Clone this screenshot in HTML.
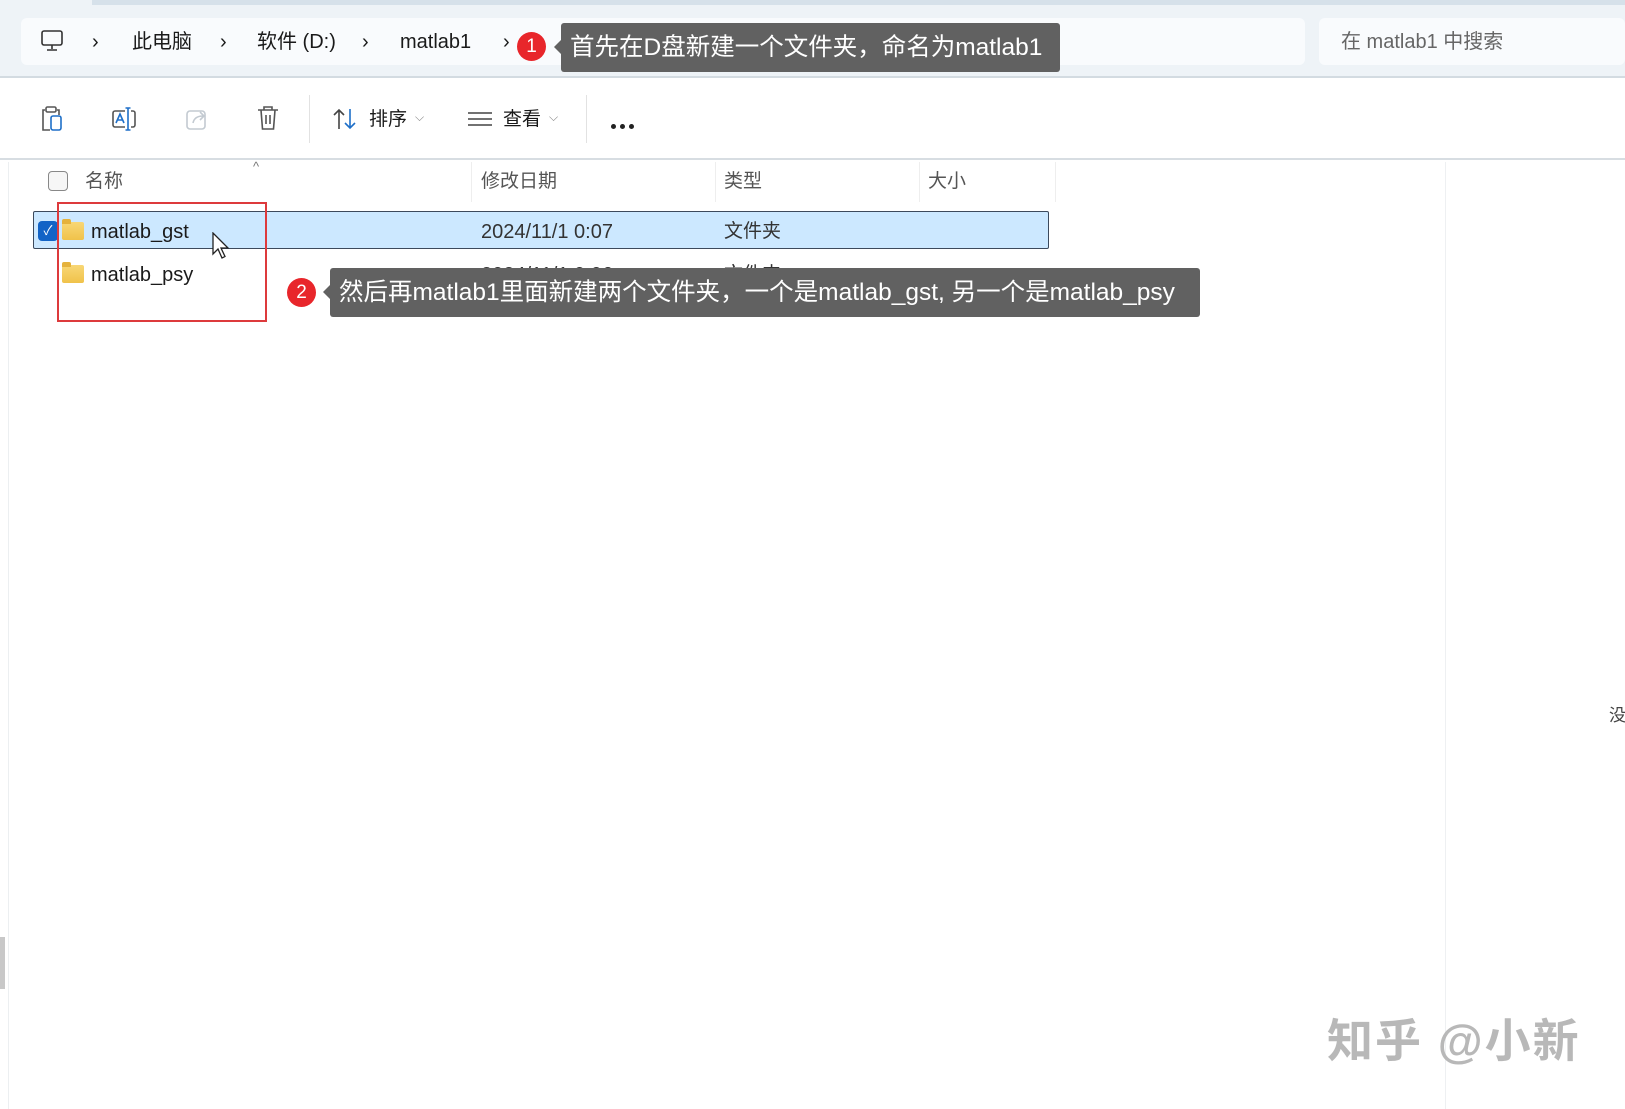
<!DOCTYPE html>
<html><head><meta charset="utf-8"><style>
*{margin:0;padding:0;box-sizing:border-box}
body{width:1625px;height:1109px;overflow:hidden;background:#fff;position:relative;font-family:"Liberation Sans","Noto Sans CJK SC",sans-serif;color:#1a1a1a}
.a{position:absolute;white-space:nowrap;line-height:1}
.t{font-size:20px}
</style></head><body>
<div class="a" style="left:0;top:0;width:1625px;height:78px;background:#eef3f7;border-bottom:2px solid #d3dbe1"></div>
<div class="a" style="left:92px;top:0;width:1533px;height:5px;background:#d6e1ea"></div>
<div class="a" style="left:21px;top:18px;width:1284px;height:47px;background:#f9fbfd;border-radius:6px"></div>
<div class="a" style="left:1319px;top:18px;width:306px;height:47px;background:#f9fbfd;border-radius:6px"></div>
<svg class="a" style="left:40px;top:29px" width="24" height="24" viewBox="0 0 24 24" fill="none" stroke="#333" stroke-width="1.6"><rect x="2" y="2" width="20" height="14" rx="2"/><path d="M12 16v4M7 21h10"/></svg>
<div class="a t" style="left:92px;top:32px">›</div>
<div class="a t" style="left:132px;top:32px">此电脑</div>
<div class="a t" style="left:220px;top:32px">›</div>
<div class="a t" style="left:257px;top:32px">软件 (D:)</div>
<div class="a t" style="left:362px;top:32px">›</div>
<div class="a t" style="left:400px;top:32px">matlab1</div>
<div class="a t" style="left:503px;top:32px">›</div>
<div class="a t" style="left:1341px;top:32px;color:#666">在 matlab1 中搜索</div>
<div class="a" style="left:517px;top:32px;width:29px;height:29px;border-radius:50%;background:#e8262b;color:#fff;font-size:19px;text-align:center;line-height:29px">1</div>
<div class="a" style="left:554px;top:39px;width:0;height:0;border:8px solid transparent;border-right-color:#616161;border-left:0"></div>
<div class="a" style="left:561px;top:23px;width:499px;height:49px;background:#616161;border-radius:3px;color:#fff;font-size:24.5px;line-height:49px;padding-left:9px">首先在D盘新建一个文件夹，命名为matlab1</div>
<div class="a" style="left:0;top:80px;width:1625px;height:80px;background:#fff;border-bottom:2px solid #d7dde2"></div>
<svg class="a" style="left:40px;top:105px" width="24" height="28" viewBox="0 0 24 28" fill="none" stroke="#555" stroke-width="1.6"><path d="M5 5H3v20h7M17 5h2v5"/><rect x="6" y="2" width="10" height="5" rx="1.5"/><rect x="11" y="11" width="10" height="14" rx="2" stroke="#1e6fc8"/></svg>
<svg class="a" style="left:110px;top:105px" width="28" height="28" viewBox="0 0 28 28" fill="none" stroke="#555" stroke-width="1.6"><path d="M15 6H5a2 2 0 0 0-2 2v12a2 2 0 0 0 2 2h10M21 6h2a2 2 0 0 1 2 2v12a2 2 0 0 1-2 2h-2"/><path d="M6 18l4-9 4 9M7.5 15h5" stroke="#1e6fc8"/><path d="M18 3v22M15.5 3h5M15.5 25h5" stroke="#1e6fc8"/></svg>
<svg class="a" style="left:184px;top:106px" width="26" height="26" viewBox="0 0 26 26" fill="none" stroke="#c3cad1" stroke-width="1.6"><rect x="3" y="5" width="18" height="18" rx="3"/><path d="M9 17c1-5 5-7 10-7M16 6l4 4-4 4"/></svg>
<svg class="a" style="left:256px;top:104px" width="24" height="28" viewBox="0 0 24 28" fill="none" stroke="#555" stroke-width="1.6"><path d="M2 6h20M8 6V3h8v3M5 6l1.5 19h11L19 6M10 11v9M14 11v9"/></svg>
<div class="a" style="left:309px;top:95px;width:1px;height:48px;background:#e2e2e2"></div>
<svg class="a" style="left:332px;top:107px" width="26" height="24" viewBox="0 0 26 24" fill="none" stroke-width="1.6"><path d="M7 22V3M2 8l5-5 5 5" stroke="#444"/><path d="M18 2v19M13 16l5 5 5-5" stroke="#1e6fc8"/></svg>
<div class="a" style="left:369px;top:110px;font-size:19px">排序</div>
<div class="a" style="left:415px;top:111px;font-size:12px;color:#888">⌵</div>
<svg class="a" style="left:468px;top:111px" width="24" height="16" viewBox="0 0 24 16" stroke="#444" stroke-width="1.6"><path d="M0 2h24M0 8h24M0 14h24"/></svg>
<div class="a" style="left:503px;top:110px;font-size:19px">查看</div>
<div class="a" style="left:549px;top:111px;font-size:12px;color:#888">⌵</div>
<div class="a" style="left:586px;top:95px;width:1px;height:48px;background:#e2e2e2"></div>
<div class="a" style="left:611px;top:117px"><span style="display:inline-block;width:5px;height:5px;border-radius:50%;background:#222;margin-right:4px"></span><span style="display:inline-block;width:5px;height:5px;border-radius:50%;background:#222;margin-right:4px"></span><span style="display:inline-block;width:5px;height:5px;border-radius:50%;background:#222"></span></div>
<div class="a" style="left:8px;top:162px;width:1px;height:947px;background:#eceff1"></div>
<div class="a" style="left:0;top:937px;width:5px;height:52px;background:#c8c8c8"></div>
<div class="a" style="left:1445px;top:162px;width:1px;height:947px;background:#eef0f2"></div>
<div class="a" style="left:48px;top:171px;width:20px;height:20px;border:1.5px solid #888;border-radius:4px;background:#f6f6f6"></div>
<div class="a" style="left:85px;top:172px;font-size:19px;color:#555">名称</div>
<div class="a" style="left:253px;top:160px;font-size:13px;color:#777">^</div>
<div class="a" style="left:471px;top:162px;width:1px;height:40px;background:#eee"></div>
<div class="a" style="left:715px;top:162px;width:1px;height:40px;background:#eee"></div>
<div class="a" style="left:919px;top:162px;width:1px;height:40px;background:#eee"></div>
<div class="a" style="left:1055px;top:162px;width:1px;height:40px;background:#eee"></div>
<div class="a" style="left:481px;top:172px;font-size:19px;color:#555">修改日期</div>
<div class="a" style="left:724px;top:172px;font-size:19px;color:#555">类型</div>
<div class="a" style="left:928px;top:172px;font-size:19px;color:#555">大小</div>
<div class="a" style="left:33px;top:211px;width:1016px;height:38px;background:#cce8ff;border:1.5px solid #3c4a5c;border-radius:2px"></div>
<div class="a" style="left:38px;top:221px;width:20px;height:20px;background:#1263c6;border-radius:4px;color:#fff;font-size:13px;text-align:center;line-height:20px">✓</div>
<div class="a" style="left:62px;top:222px;width:22px;height:18px;background:linear-gradient(#f8d775,#f0c24a);border-radius:2px"></div>
<div class="a" style="left:62px;top:219px;width:9px;height:5px;background:#e5b23c;border-radius:2px 2px 0 0"></div>
<div class="a" style="left:91px;top:222px;font-size:20px">matlab_gst</div>
<div class="a" style="left:481px;top:222px;font-size:20px;color:#333">2024/11/1 0:07</div>
<div class="a" style="left:724px;top:222px;font-size:19px;color:#333">文件夹</div>
<svg class="a" style="left:212px;top:232px" width="20" height="28" viewBox="0 0 20 28"><path d="M1 1v21l5-5 4 9 3-1.5-4-8.5h7z" fill="#fff" stroke="#222" stroke-width="1.3"/></svg>
<div class="a" style="left:62px;top:265px;width:22px;height:18px;background:linear-gradient(#f8d775,#f0c24a);border-radius:2px"></div>
<div class="a" style="left:62px;top:262px;width:9px;height:5px;background:#e5b23c;border-radius:2px 2px 0 0"></div>
<div class="a" style="left:91px;top:265px;font-size:20px">matlab_psy</div>
<div class="a" style="left:481px;top:265px;font-size:20px;color:#333">2024/11/1 0:06</div>
<div class="a" style="left:724px;top:265px;font-size:19px;color:#333">文件夹</div>
<div class="a" style="left:57px;top:202px;width:210px;height:120px;border:2px solid #dd3a3c"></div>
<div class="a" style="left:287px;top:278px;width:29px;height:29px;border-radius:50%;background:#e8262b;color:#fff;font-size:19px;text-align:center;line-height:29px">2</div>
<div class="a" style="left:323px;top:284px;width:0;height:0;border:8px solid transparent;border-right-color:#616161;border-left:0"></div>
<div class="a" style="left:330px;top:268px;width:870px;height:49px;background:#616161;border-radius:3px;color:#fff;font-size:24.5px;line-height:49px;padding-left:9px">然后再matlab1里面新建两个文件夹，一个是matlab_gst, 另一个是matlab_psy</div>
<div class="a" style="left:1609px;top:707px;font-size:17px;color:#444">没</div>
<div class="a" style="left:1327px;top:1018px;font-size:46px;color:#b8b8b8;font-weight:bold;letter-spacing:2px">知乎 @小新</div>
</body></html>
